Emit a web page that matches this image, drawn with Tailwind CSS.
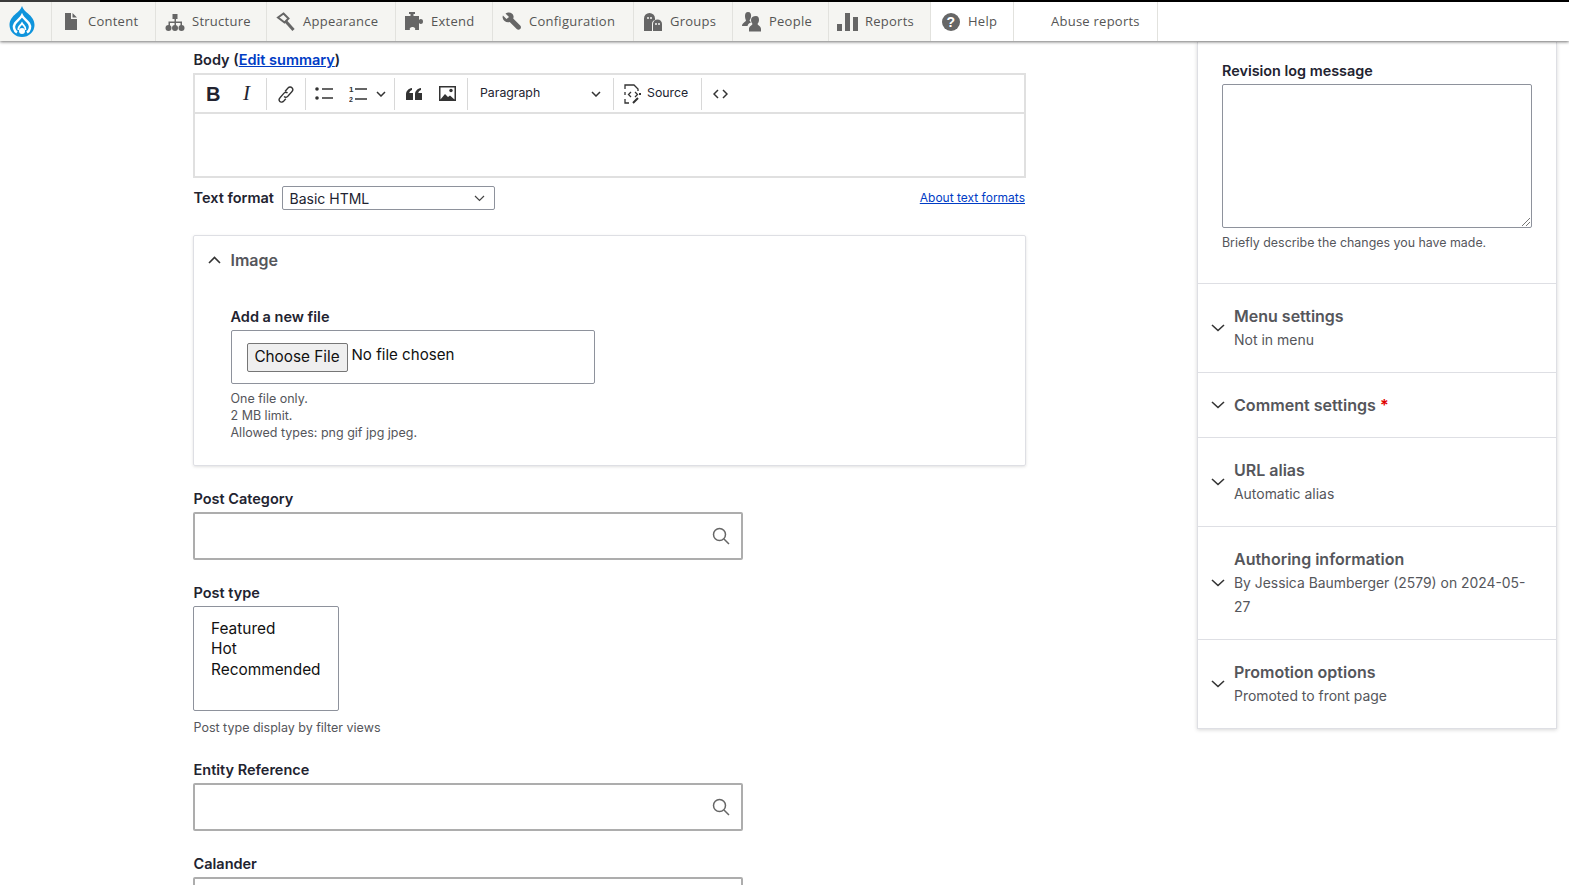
<!doctype html>
<html><head><meta charset="utf-8"><script src="https://cdn.jsdelivr.net/npm/@tailwindcss/browser@4"></script></head>
<body class="m-0 bg-white">
<div class="w-[1569px] h-[885px] overflow-hidden relative bg-white font-['Inter','Liberation_Sans',sans-serif] text-[#222330]">
<!-- toolbar -->
<header class="absolute top-0 left-0 right-0 z-10 h-[41px] bg-white border-t-2 border-black shadow-[0_1px_3px_rgba(0,0,0,0.55)] flex font-['Open_Sans','Liberation_Sans',sans-serif] text-[13px] tracking-[0.25px] text-[#555]">
  <div class="absolute -top-[2px] left-0 w-[100px] h-[2px] bg-[#3a3a3a]"></div>
  <div class="w-[52px] bg-[#f5f5f2] border-r border-[#e2e2de] flex items-center justify-center">
    <svg class="w-[26px] h-[31px] -ml-[8px]" viewBox="0 0 26 31"><path fill="#0f94dc" d="M13 0c1 3.500 3.500 5.500 6 7.500 3.500 3 6.500 6.500 6.500 11.500A12.500 12 0 0 1 .5 19C.5 14 3.500 10.500 7 7.500 9.500 5.500 12 3.500 13 0z"/><path fill="none" stroke="#fff" stroke-width="2.400" d="M8 26.500C5 24.500 4 20.500 6 17.500 8 14.500 11.500 12.500 13 9.500c1.500 3 5 5 7 8 2 3 1 7-2 9"/><path fill="none" stroke="#fff" stroke-width="1.800" d="M9.500 24c-.5-2 .5-3.500 1.800-4.700.7-.6 1.300-1.300 1.700-2 .4.700 1 1.400 1.700 2 1.300 1.200 2.300 2.700 1.800 4.700"/><circle cx="13" cy="25" r="3" fill="#fff"/></svg>
  </div>
  <a class="w-[104px] bg-[#f5f5f2] border-r border-[#e2e2de] flex items-center pl-[12px] gap-[10px]"><svg class="w-[14px] h-[17px]" viewBox="0 0 14 17"><path fill="#666" d="M1 0h6v6h6v11H1z M8.500 0L13 4.500H8.500z"/></svg><span>Content</span></a>
  <a class="w-[111px] bg-[#f5f5f2] border-r border-[#e2e2de] flex items-center pl-[9px] gap-[7px]"><svg class="w-[20px] h-[18px]" viewBox="0 0 20 18"><path fill="#666" d="M7.500 1h5v5h-1.500v2.500h6V13h-1.500V10h-4.500v3H9.500v-3H5v3H3.500V8.500h6V6H7.500z"/><circle cx="3.500" cy="15" r="3" fill="#666"/><circle cx="10" cy="15" r="3" fill="#666"/><circle cx="16.500" cy="15" r="3" fill="#666"/></svg><span>Structure</span></a>
  <a class="w-[129px] bg-[#f5f5f2] border-r border-[#e2e2de] flex items-center pl-[9px] gap-[8px]"><svg class="w-[19px] h-[19px]" viewBox="0 0 19 19"><path fill="#f5f5f2" stroke="#666" stroke-width="2" d="M7.500 1.500l5 5-4 4-6.500-5z"/><path stroke="#666" stroke-width="3" d="M9.500 9l8 9"/></svg><span>Appearance</span></a>
  <a class="w-[97px] bg-[#f5f5f2] border-r border-[#e2e2de] flex items-center pl-[8px] gap-[7px]"><svg class="w-[20px] h-[19px]" viewBox="0 0 20 19"><path fill="#666" d="M5 0h6v2H9.500v2H15v4c1-1.500 4-1.500 4 1.500S16 12.500 15 11v7h-4c1-2-1-3-2.500-3S5 16 6 18H1V4h5.500V2H5z"/></svg><span>Extend</span></a>
  <a class="w-[141px] bg-[#f5f5f2] border-r border-[#e2e2de] flex items-center pl-[8px] gap-[8px]"><svg class="w-[20px] h-[19px]" viewBox="0 0 20 19"><path fill="#666" d="M7 .5c2.500-.5 5 1 5.500 3.500.2 1 0 1.800-.3 2.500l7 7c1 1 1 2.500 0 3.500s-2.500 1-3.500 0l-7-7c-3 1-6.500-1-7-4-.2-1 0-1.800.2-2.500L5.500 7 8 5 4.500 1.500C5 1 6 .7 7 .5z"/></svg><span>Configuration</span></a>
  <a class="w-[99px] bg-[#f5f5f2] border-r border-[#e2e2de] flex items-center pl-[9px] gap-[7px]"><svg class="w-[20px] h-[20px]" viewBox="0 0 20 20"><path fill="#666" d="M1 19V6.500a5.500 5.500 0 0 1 11 0V8a4 4 0 0 0-3 4v7z"/><path fill="#666" d="M10 19v-7a4.500 4.500 0 0 1 9 0v7z"/><circle cx="5" cy="6" r="1" fill="#f5f5f2"/><circle cx="8" cy="6" r="1" fill="#f5f5f2"/><circle cx="13" cy="12" r="1" fill="#f5f5f2"/><circle cx="16" cy="12" r="1" fill="#f5f5f2"/></svg><span>Groups</span></a>
  <a class="w-[96px] bg-[#f5f5f2] border-r border-[#e2e2de] flex items-center pl-[8px] gap-[7px]"><svg class="w-[21px] h-[20px]" viewBox="0 0 21 20"><path fill="#666" d="M7 0c2.500 0 3.500 2 3 5-.3 1.500-1 2.500-1.500 3.500l1.500 2c-2 .5-3 1.500-3.500 3.500H1c0-3 3-3.500 4-5.500C4.500 7 4 6 4 4c0-2.500 1-4 3-4z"/><path fill="#666" d="M15 4c2 0 3 1.500 3 4 0 2-1 3-1.500 4 .5 1.500 3.500 2 3.500 5v2.500H8V17c0-3 3-3.500 3.500-5-.5-1-1.500-2-1.500-4 0-2.500 2-4 5-4z"/></svg><span>People</span></a>
  <a class="w-[102px] bg-[#f5f5f2] border-r border-[#e2e2de] flex items-center pl-[8px] gap-[7px]"><svg class="w-[21px] h-[18px]" viewBox="0 0 21 18"><path fill="#666" d="M0 11h5v7H0zM8 0h5v18H8zM16 4h5v14h-5z"/></svg><span>Reports</span></a>
  <a class="w-[83px] bg-white border-r border-[#e2e2de] flex items-center pl-[11px] gap-[8px]"><svg class="w-[18px] h-[18px]" viewBox="0 0 18 18"><circle cx="9" cy="9" r="9" fill="#666"/><text x="9" y="14" text-anchor="middle" font-size="14" font-weight="700" fill="#fff" font-family="Liberation Sans">?</text></svg><span>Help</span></a>
  <a class="w-[144px] bg-white border-r border-[#e2e2de] flex items-center pl-[37px]"><span>Abuse reports</span></a>
</header>

<main class="grid grid-cols-[833px_360px] gap-x-[171px] pl-[193px] pt-[50px]">
  <!-- left column -->
  <section class="text-[14.500px]">
    <div class="font-semibold leading-[20px] pl-[0.500px]">Body (<a class="text-[#003cc5] underline">Edit summary</a>)</div>
    <div class="mt-[3px] border-2 border-[#e0e0e0] h-[105px] flex flex-col">
      <div class="h-[39px] border-b-2 border-[#e0e0e0] flex items-center text-[#222330]">
        <div class="w-[72px] h-[32px] border-r border-[#d8d8d8] flex items-center pl-[11px] gap-[23px]">
          <span class="font-['Liberation_Sans',sans-serif] font-bold text-[20px] w-[14px]">B</span>
          <span class="font-['Liberation_Serif',serif] italic text-[21px] w-[12px]">I</span>
        </div>
        <div class="w-[39px] h-[32px] border-r border-[#d8d8d8] flex items-center justify-center"><svg class="w-[18px] h-[18px]" viewBox="0 0 18 18" fill="none" stroke="#333" stroke-width="1.300"><path d="M8 6.500l3-3.500c1.200-1.300 3-1.300 4-.3s1 2.800-.2 4l-4 4.500c-1.200 1.200-2.800 1.200-3.800.3"/><path d="M10.500 8c-1-1-2.500-1-3.500.2L3 12.800c-1.200 1.300-1.200 2.700-.2 3.700s2.800.8 4-.5l2-2.300"/></svg></div>
        <div class="w-[89px] h-[32px] border-r border-[#d8d8d8] flex items-center pl-[9px]">
          <svg class="w-[18px] h-[13px]" viewBox="0 0 18 13"><circle cx="2" cy="2" r="1.800" fill="#333"/><circle cx="2" cy="11" r="1.800" fill="#333"/><path stroke="#333" stroke-width="1.400" d="M7 2h11M7 11h11"/></svg>
          <svg class="w-[18px] h-[18px] ml-[16px]" viewBox="0 0 18 18"><text x="0" y="7" font-size="8" font-weight="700" fill="#333" font-family="Liberation Sans">1</text><text x="0" y="17" font-size="7" font-weight="700" fill="#333" font-family="Liberation Sans">2</text><path stroke="#333" stroke-width="1.400" d="M6 4h12M6 14h12"/></svg>
          <svg class="w-[10px] h-[6px] ml-[9px]" viewBox="0 0 10 6" fill="none" stroke="#333" stroke-width="1.500"><path d="M1 1l4 4 4-4"/></svg>
        </div>
        <div class="w-[73px] h-[32px] border-r border-[#d8d8d8] flex items-center pl-[11px] gap-[17px]">
          <svg class="w-[16px] h-[12px]" viewBox="0 0 16 12"><path fill="#333" d="M0 6.500C0 3 2.500.5 6 0v2C4.500 2.500 3.500 3.500 3.300 5H7v7H0zM9 6.500C9 3 11.500.5 15 0v2c-1.500.5-2.500 1.500-2.700 3H16v7H9z"/></svg>
          <svg class="w-[17px] h-[15px]" viewBox="0 0 17 15"><rect x=".75" y=".75" width="15.500" height="13.500" fill="#fff" stroke="#333" stroke-width="1.500"/><path fill="#333" d="M1 14l5-6 3 3 2-1.500 5 4.500z"/><circle cx="12" cy="4.500" r="1.700" fill="#333"/></svg>
        </div>
        <div class="w-[146px] h-[32px] border-r border-[#d8d8d8] flex items-center pl-[12px] pr-[12px] justify-between text-[12.300px]">
          <span>Paragraph</span>
          <svg class="w-[10px] h-[6px]" viewBox="0 0 10 6" fill="none" stroke="#333" stroke-width="1.500"><path d="M1 1l4 4 4-4"/></svg>
        </div>
        <div class="w-[88px] h-[32px] border-r border-[#d8d8d8] flex items-center pl-[10px] gap-[4px] text-[12.300px]">
          <svg class="w-[19px] h-[20px]" viewBox="0 0 19 20" fill="none" stroke="#333" stroke-width="1.300"><path d="M1 5V1h9l4 4v2M1 15v4h4M1 8v3"/><path d="M7 8l-2.500 2.500L7 13M11 8l2.500 2.500L11 13"/><path stroke-width="2" d="M9 19l5-5M16 9v2"/></svg>
          <span>Source</span>
        </div>
        <div class="pl-[11px] flex items-center"><svg class="w-[15px] h-[10px]" viewBox="0 0 15 10" fill="none" stroke="#333" stroke-width="1.500"><path d="M5 1L1 5l4 4M10 1l4 4-4 4"/></svg></div>
      </div>
      <div class="flex-1"></div>
    </div>

    <div class="mt-[7px] h-[26px] flex items-center justify-between">
      <div class="flex items-center">
        <span class="font-semibold pl-[0.500px]">Text format</span>
        <div class="ml-[8.500px] w-[213px] h-[24px] border border-[#8e929c] rounded-[2px] flex items-center justify-between pl-[6px] pr-[9px] text-[14px]">
          <span>Basic HTML</span>
          <svg class="w-[11px] h-[7px]" viewBox="0 0 11 7" fill="none" stroke="#444" stroke-width="1.200"><path d="M1 1l4.500 4.500L10 1"/></svg>
        </div>
      </div>
      <a class="text-[12px] text-[#003cc5] underline pr-[1px]">About text formats</a>
    </div>

    <div class="mt-[24px] h-[231px] border border-[#dedfe4] rounded-[2px] shadow-[0_1px_3px_rgba(0,0,0,0.12)] pl-[36.500px]">
      <div class="relative h-[48px] flex items-center font-semibold text-[16px] text-[#55565b]">
        <svg class="absolute -left-[23px] top-[20px] w-[13px] h-[8px]" viewBox="0 0 13 8" fill="none" stroke="#333" stroke-width="1.600"><path d="M1 7l5.500-5.500L12 7"/></svg>
        Image
      </div>
      <div class="mt-[23px] font-semibold leading-[20px]">Add a new file</div>
      <div class="mt-[3px] w-[364px] h-[54px] border border-[#8e929c] rounded-[2px] flex items-start pl-[15px] pt-[12px] text-[15.300px]">
        <div class="w-[101px] h-[29px] bg-[#efefef] border border-[#767676] rounded-[2px] flex items-center justify-center text-[#111]">Choose File</div>
        <span class="ml-[4px] mt-[1px] leading-[22px] text-[#111] text-[15.100px]">No file chosen</span>
      </div>
      <div class="mt-[6px] text-[12.500px] leading-[17px] text-[#55565b]">One file only.<br>2 MB limit.<br>Allowed types: png gif jpg jpeg.</div>
    </div>

    <div class="mt-[23px] font-semibold leading-[20px] pl-[0.500px]">Post Category</div>
    <div class="mt-[3px] w-[550px] h-[48px] border-2 border-[#adadad] rounded-[2px] flex items-center justify-end pr-[11px]">
      <svg class="w-[18px] h-[18px]" viewBox="0 0 18 18" fill="none" stroke="#666" stroke-width="1.500"><circle cx="7.500" cy="7.500" r="6"/><path d="M12 12l5 5"/></svg>
    </div>
    <div class="mt-[23px] font-semibold leading-[20px] pl-[0.500px]">Post type</div>
    <div class="mt-[3px] w-[146px] h-[105px] border border-[#8e929c] rounded-[2px] pl-[17px] pt-[12px] text-[15.400px] leading-[20.300px] text-[#111]">Featured<br>Hot<br>Recommended</div>
    <div class="mt-[7px] text-[12.500px] leading-[20px] text-[#55565b] pl-[0.500px]">Post type display by filter views</div>
    <div class="mt-[22px] font-semibold leading-[20px] pl-[0.500px]">Entity Reference</div>
    <div class="mt-[3px] w-[550px] h-[48px] border-2 border-[#adadad] rounded-[2px] flex items-center justify-end pr-[11px]">
      <svg class="w-[18px] h-[18px]" viewBox="0 0 18 18" fill="none" stroke="#666" stroke-width="1.500"><circle cx="7.500" cy="7.500" r="6"/><path d="M12 12l5 5"/></svg>
    </div>
    <div class="mt-[23px] font-semibold leading-[20px] pl-[0.500px]">Calander</div>
    <div class="mt-[3px] w-[550px] h-[48px] border-2 border-[#adadad] rounded-[2px]"></div>
  </section>

  <!-- right column -->
  <aside class="w-[360px] h-[687px] -mt-[8px] border-x border-b border-[#dedfe4] shadow-[0_1px_4px_rgba(0,0,0,0.16)] bg-white text-[14px] flex flex-col">
    <div class="h-[242px] border-b border-[#dedfe4] pl-[24px] pt-[19px]">
      <div class="font-semibold leading-[20px] text-[14.400px]">Revision log message</div>
      <div class="relative mt-[3px] w-[310px] h-[144px] border border-[#8e929c] rounded-[2px]">
        <svg class="absolute right-[1px] bottom-[1px] w-[8px] h-[8px]" viewBox="0 0 8 8" stroke="#666" stroke-width=".9"><path d="M0 8l8-8M4 8l4-4"/></svg>
      </div>
      <div class="mt-[6px] text-[12.400px] leading-[18px] text-[#55565b]">Briefly describe the changes you have made.</div>
    </div>
    <div class="relative h-[89px] border-b border-[#dedfe4] pl-[36px] pt-[20px]">
      <svg class="absolute left-[13px] top-[40px] w-[14px] h-[8px]" viewBox="0 0 14 8" fill="none" stroke="#333" stroke-width="1.600"><path d="M1 1l6 5.500L13 1"/></svg>
      <div class="font-semibold text-[16px] leading-[24px] text-[#55565b]">Menu settings</div>
      <div class="leading-[24px] text-[#55565b]">Not in menu</div>
    </div>
    <div class="relative h-[65px] border-b border-[#dedfe4] pl-[36px] pt-[20px]">
      <svg class="absolute left-[13px] top-[28px] w-[14px] h-[8px]" viewBox="0 0 14 8" fill="none" stroke="#333" stroke-width="1.600"><path d="M1 1l6 5.500L13 1"/></svg>
      <div class="font-semibold text-[16.100px] leading-[24px] text-[#55565b]">Comment settings <span class="text-[#e00000]">*</span></div>
    </div>
    <div class="relative h-[89px] border-b border-[#dedfe4] pl-[36px] pt-[20px]">
      <svg class="absolute left-[13px] top-[40px] w-[14px] h-[8px]" viewBox="0 0 14 8" fill="none" stroke="#333" stroke-width="1.600"><path d="M1 1l6 5.500L13 1"/></svg>
      <div class="font-semibold text-[16px] leading-[24px] text-[#55565b]">URL alias</div>
      <div class="leading-[24px] text-[13.950px] text-[#55565b]">Automatic alias</div>
    </div>
    <div class="relative h-[113px] border-b border-[#dedfe4] pl-[36px] pr-[28px] pt-[20px]">
      <svg class="absolute left-[13px] top-[52px] w-[14px] h-[8px]" viewBox="0 0 14 8" fill="none" stroke="#333" stroke-width="1.600"><path d="M1 1l6 5.500L13 1"/></svg>
      <div class="font-semibold text-[16px] leading-[24px] text-[#55565b]">Authoring information</div>
      <div class="leading-[24px] text-[13.900px] text-[#55565b]">By Jessica Baumberger (2579) on 2024-05-27</div>
    </div>
    <div class="relative flex-1 pl-[36px] pt-[20px]">
      <svg class="absolute left-[13px] top-[40px] w-[14px] h-[8px]" viewBox="0 0 14 8" fill="none" stroke="#333" stroke-width="1.600"><path d="M1 1l6 5.500L13 1"/></svg>
      <div class="font-semibold text-[16px] leading-[24px] text-[#55565b]">Promotion options</div>
      <div class="leading-[24px] text-[13.950px] text-[#55565b]">Promoted to front page</div>
    </div>
  </aside>
</main>
</div>
</body></html>
